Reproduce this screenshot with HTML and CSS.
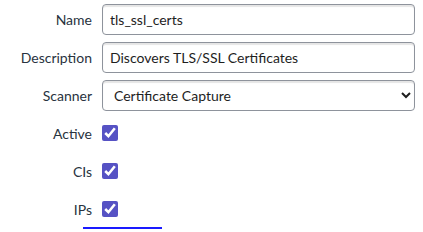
FILE: index.html
```html
<!DOCTYPE html>
<html lang="en">
<head>
    <meta charset="UTF-8">
    <meta name="viewport" content="width=device-width, initial-scale=1.0">
    <link rel="stylesheet" href="styles.css">
</head>
<body>
    <form class="scan-form">
        <label class="field-label" for="name">Name</label>
        <div class="field"><input id="name" class="text-input" type="text" value="tls_ssl_certs"></div>

        <label class="field-label" for="desc">Description</label>
        <div class="field"><input id="desc" class="text-input" type="text" value="Discovers TLS/SSL Certificates"></div>

        <label class="field-label" for="scanner">Scanner</label>
        <div class="field">
            <select id="scanner" class="select-input">
                <option>Certificate Capture</option>
            </select>
        </div>

        <label class="field-label" for="active">Active</label>
        <div class="field"><input id="active" class="check" type="checkbox" checked></div>

        <label class="field-label" for="cis">CIs</label>
        <div class="field"><input id="cis" class="check" type="checkbox" checked></div>

        <label class="field-label" for="ips">IPs</label>
        <div class="field"><input id="ips" class="check" type="checkbox" checked></div>
    </form>
    <div class="focus-line"></div>
</body>
</html>
```

FILE: styles.css
```css
body {
    margin: 0;
    padding: 0;
    background: #fff;
    font-family: Lato, "Liberation Sans", sans-serif;
    font-size: 14px;
    color: #2e2e2e;
}

.scan-form {
    display: grid;
    grid-template-columns: 92px 313px;
    grid-auto-rows: 38px;
    column-gap: 10px;
    align-items: center;
}

.field-label {
    text-align: right;
    color: #293340;
    font-size: 14px;
}

.field {
    display: flex;
    align-items: center;
}

.text-input,
.select-input {
    box-sizing: border-box;
    width: 100%;
    height: 31px;
    margin: 0;
    padding: 0 7px;
    border: 1px solid #8e939c;
    border-radius: 4px;
    box-shadow: inset 0 2px 1px rgba(0, 0, 0, 0.1);
    font-family: inherit;
    font-size: 14px;
    color: #1e1e1e;
    background: #fff;
}

.select-input {
    padding-left: 7px;
}

.check {
    width: 16px;
    height: 16px;
    margin: 0;
    accent-color: #5652c4;
}

.focus-line {
    width: 79px;
    height: 2px;
    margin: -1px 0 0 83px;
    background: #1a1aff;
}
```
